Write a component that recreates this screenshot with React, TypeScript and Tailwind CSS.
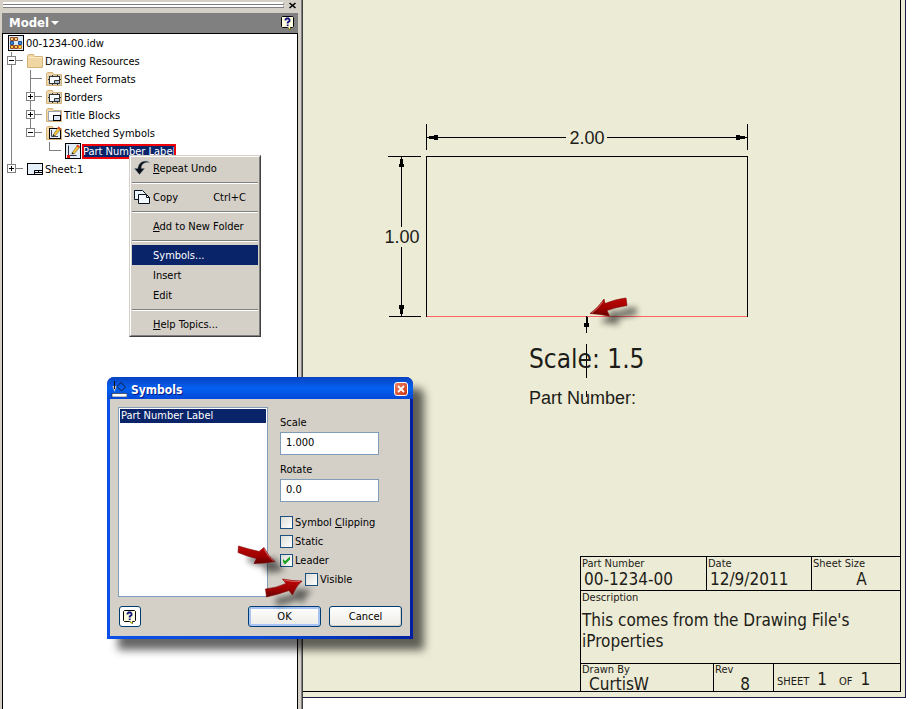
import { ReactNode } from 'react';

type Guide = 'line' | 'blank' | 'tee' | 'elbow' | 'plus' | 'minus' | 'plusLast' | 'minusLast';

interface TreeRow {
  label: string;
  icon: ReactNode;
  guides: Guide[];
  selected?: boolean;
}

const TreeGuide = ({ kind }: { kind: Guide }) => {
  const isBox = kind.startsWith('plus') || kind.startsWith('minus');
  const isLast = kind === 'elbow' || kind.endsWith('Last');

  return (
    <svg
      className="h-[18px] w-[19px] shrink-0"
      viewBox="0 0 19 18"
      fill="none"
      stroke="#808080"
      shapeRendering="crispEdges"
    >
      {kind !== 'blank' && <path d={isLast ? 'M5.5 0V9' : 'M5.5 0V18'} />}
      {kind !== 'blank' && kind !== 'line' && <path d="M5 8.5H17" />}
      {isBox && (
        <>
          <rect x="1.5" y="4.5" width="8" height="8" fill="#fff" />
          <path d="M3 8.5H8" stroke="#000" />
          {kind.startsWith('plus') && <path d="M5.5 6V11" stroke="#000" />}
        </>
      )}
    </svg>
  );
};

const Icon = ({ children }: { children: ReactNode }) => (
  <svg className="size-4 shrink-0" viewBox="0 0 16 16" fill="none" aria-hidden="true">
    {children}
  </svg>
);

const FolderShape = () => (
  <>
    <path d="M.5 14.5V2.5l1-1h5l1 2h8v11z" fill="#f0d6a2" stroke="#d4b27a" />
    <path d="M1 4.500h14" stroke="#fbeccb" />
  </>
);

const DrawingIcon = () => (
  <Icon>
    <rect x=".5" y=".5" width="15" height="15" fill="#dcebfa" stroke="#000" />
    <g strokeWidth="1">
      <path d="M2.500 2.500h3v3h-3z" fill="#f3d48a" stroke="#9a4a1c" />
      <path d="M6.500 2.500h3v3h-3z" fill="#f3d48a" stroke="#9a4a1c" />
      <path d="M2.500 6.500h3v3h-3z" fill="#3f8ad6" stroke="#1d4f94" />
      <path d="M10.500 6.500h3v3h-3z" fill="#3f8ad6" stroke="#1d4f94" />
      <path d="M2.500 10.500h3v3h-3z" fill="#f5c64c" stroke="#9a4a1c" />
      <path d="M6.500 10.500h3v3h-3z" fill="#f5c64c" stroke="#9a4a1c" />
      <path d="M10.500 10.500h3v3h-3z" fill="#ffe040" stroke="#c8701c" />
    </g>
  </Icon>
);

const FolderIcon = () => (
  <Icon>
    <FolderShape />
  </Icon>
);

const FormatFolderIcon = () => (
  <Icon>
    <FolderShape />
    <rect x="2" y="4" width="13" height="10" fill="#d3cdb9" />
    <rect x="3.500" y="5.500" width="10" height="7" fill="#f6f9fd" stroke="#303234" />
    <path d="M2 8.500h1M14 8.500h1M6.500 4v1M11.500 4v1M6.500 13v1M11.500 13v1" stroke="#303234" />
    <path d="M8.500 12V9.500H13" stroke="#303234" />
    <path d="M9 10h4v2H9z" fill="#b4c2d6" />
  </Icon>
);

const TitleFolderIcon = () => (
  <Icon>
    <FolderShape />
    <rect x="2.500" y="4.500" width="12" height="9" fill="#fff" stroke="#9aa5b5" />
    <rect x="7.500" y="8.500" width="7" height="5" fill="#dce8f8" stroke="#000" />
  </Icon>
);

const Pencil = () => (
  <>
    <path d="M7 10l5.500-8 2.500 2-6 7z" fill="#f6c234" stroke="#7a6a4a" strokeWidth=".6" />
    <path d="M12.500 1.500l2.500 2-1.200 1.500-2.400-2z" fill="#e04a2b" />
    <path d="M6.500 11.500l.6-2.200 1.800 1.500z" fill="#222" />
  </>
);

const SketchFolderIcon = () => (
  <Icon>
    <FolderShape />
    <rect x="3.500" y="3.500" width="11" height="10" fill="#e6effa" stroke="#000" />
    <path d="M5.500 5v6.500H12" stroke="#445" />
    <Pencil />
  </Icon>
);

const SketchIcon = () => (
  <Icon>
    <rect x=".5" y=".5" width="15" height="15" fill="#e2edfa" stroke="#000" />
    <path d="M3.500 2.500v10h8" stroke="#334" />
    <Pencil />
    <path d="M2 12h3v3H2z" fill="#f01010" />
  </Icon>
);

const SheetIcon = () => (
  <Icon>
    <rect x=".5" y="2.500" width="15" height="11" fill="#e6f0fb" stroke="#000" />
    <path d="M7.500 13V9.500H15M7.500 11.500H15M11.500 9.500V12" stroke="#000" />
  </Icon>
);

const HelpIcon = () => (
  <svg className="size-[14px]" viewBox="0 0 14 14" aria-hidden="true">
    <path d="M1.500.5h10l1 1v9l-1 1H9.500v2l-3-2h-5l-1-1v-9z" fill="#fffde0" stroke="#000" />
    <path
      d="M4.500 4.500V3.500l1-1h2l1 1v1.500l-1.800 1.500v1"
      fill="none"
      stroke="#12127c"
      strokeWidth="1.800"
    />
    <path d="M5.800 8.500h1.800v1.600H5.800z" fill="#12127c" />
    <path d="M7 12h2.500v2z" fill="#e8e020" />
  </svg>
);

const UndoIcon = () => (
  <Icon>
    <path
      d="M15.500 2.500C14 .5 5 -.5 3.800 8.500H.5L5.500 14.500l5-6H7.300C7 5 10 1.500 15.500 2.500z"
      fill="#0b1016"
      stroke="#6d8799"
      strokeWidth=".4"
    />
  </Icon>
);

const CopyIcon = () => (
  <Icon>
    <path d="M.5 1.500h8l3 3v6H.5z" fill="#eaf2fc" stroke="#0a1420" />
    <path d="M4.500 5.500h8l3 3v6h-11z" fill="#f4f9ff" stroke="#0a1420" />
    <path d="M12.500 5.500v3h3" stroke="#0a1420" />
  </Icon>
);

const treeRows: TreeRow[] = [
  { label: '00-1234-00.idw', icon: <DrawingIcon />, guides: [] },
  { label: 'Drawing Resources', icon: <FolderIcon />, guides: ['minus'] },
  { label: 'Sheet Formats', icon: <FormatFolderIcon />, guides: ['line', 'tee'] },
  { label: 'Borders', icon: <FormatFolderIcon />, guides: ['line', 'plus'] },
  { label: 'Title Blocks', icon: <TitleFolderIcon />, guides: ['line', 'plus'] },
  { label: 'Sketched Symbols', icon: <SketchFolderIcon />, guides: ['line', 'minusLast'] },
  {
    label: 'Part Number Label',
    icon: <SketchIcon />,
    guides: ['line', 'blank', 'elbow'],
    selected: true,
  },
  { label: 'Sheet:1', icon: <SheetIcon />, guides: ['plusLast'] },
];

const GripBar = () => (
  <div className="h-[3px] border-t-2 border-r border-b border-t-white border-r-[#808080] border-b-[#808080]" />
);

const ModelPanel = () => (
  <aside className="flex w-[303px] shrink-0 flex-col border-r border-[#404040] bg-[#d4d0c8]">
    <div className="flex flex-1 flex-col border-r border-[#808080] pr-[3px] pl-[2px]">
      <div className="flex h-[13px] items-start gap-[5px] pt-[2px] pl-px">
        <div className="flex flex-1 flex-col">
          <GripBar />
          <GripBar />
        </div>
        <button type="button" aria-label="Close panel" className="mr-[2px] h-[7px] w-[7px]">
          <svg viewBox="0 0 7 7" className="size-[7px]" stroke="#000" strokeWidth="1.600">
            <path d="M.5 1l6 5M6.500 1l-6 5" />
          </svg>
        </button>
      </div>
      <header className="flex h-5 items-center justify-between bg-[#808080] pr-[3px] pl-[7px]">
        <button type="button" className="flex items-center gap-[2px] text-[13px] font-bold text-white">
          Model
          <svg viewBox="0 0 8 4" className="h-1 w-2" fill="#fff">
            <path d="M0 0h8L4 4z" />
          </svg>
        </button>
        <button type="button" aria-label="Help">
          <HelpIcon />
        </button>
      </header>
      <ul className="flex-1 border-x border-t border-black bg-white pl-[3px]">
        {treeRows.map((row) => (
          <li key={row.label} className="flex h-[18px] items-center">
            {row.guides.map((guide, i) => (
              <TreeGuide key={i} kind={guide} />
            ))}
            <span className="ml-[2px] flex items-center gap-[2px]">
              {row.icon}
              {row.selected ? (
                <span className="bg-[#0a246a] leading-[13px] whitespace-nowrap text-white outline-2 -outline-offset-1 outline-[#f00008]">
                  {row.label}
                </span>
              ) : (
                <span className="pt-[2px] whitespace-nowrap">{row.label}</span>
              )}
            </span>
          </li>
        ))}
      </ul>
    </div>
  </aside>
);

interface MenuItemProps {
  children: ReactNode;
  icon?: ReactNode;
  shortcut?: string;
  active?: boolean;
}

const MenuItem = ({ children, icon, shortcut, active }: MenuItemProps) => (
  <button
    type="button"
    role="menuitem"
    className={`flex h-5 w-full items-center pr-3 pl-[2px] whitespace-nowrap ${active ? 'bg-[#0a246a] text-white' : ''}`}
  >
    <span className="w-[19px] shrink-0">{icon}</span>
    <span className="pt-[2px]">{children}</span>
    {shortcut && <span className="ml-auto pt-[2px]">{shortcut}</span>}
  </button>
);

const MenuSeparator = () => (
  <div role="separator" className="my-[4px] h-px border-t border-[#808080] shadow-[0_1px_0_#fff]" />
);

const ContextMenu = () => (
  <div className="absolute top-[155px] left-[129px] w-[132px] border border-t-[#d4d0c8] border-r-[#404040] border-b-[#404040] border-l-[#d4d0c8]">
    <div
      role="menu"
      className="border border-t-white border-r-[#808080] border-b-[#808080] border-l-white bg-[#d4d0c8] p-px"
    >
      <MenuItem icon={<UndoIcon />}>
        <u>R</u>epeat Undo
      </MenuItem>
      <MenuSeparator />
      <MenuItem icon={<CopyIcon />} shortcut="Ctrl+C">
        Copy
      </MenuItem>
      <MenuSeparator />
      <MenuItem>
        <u>A</u>dd to New Folder
      </MenuItem>
      <MenuSeparator />
      <MenuItem active>Symbols...</MenuItem>
      <MenuItem>Insert</MenuItem>
      <MenuItem>Edit</MenuItem>
      <MenuSeparator />
      <MenuItem>
        <u>H</u>elp Topics...
      </MenuItem>
    </div>
  </div>
);

interface MarkerArrowProps {
  id: string;
  body: string;
  highlight: string;
}

const MarkerArrow = ({ id, body, highlight }: MarkerArrowProps) => (
  <g>
    <defs>
      <linearGradient id={`${id}-fill`} x1="0" y1="0" x2="0" y2="1">
        <stop offset="0" stopColor="#c00808" />
        <stop offset=".6" stopColor="#9c0000" />
        <stop offset="1" stopColor="#640000" />
      </linearGradient>
      <filter id={`${id}-blur`} x="-50%" y="-100%" width="200%" height="300%">
        <feGaussianBlur stdDeviation="3" />
      </filter>
    </defs>
    <path d={body} transform="translate(10 9)" fill="#000" opacity=".55" filter={`url(#${id}-blur)`} />
    <path d={body} fill={`url(#${id}-fill)`} stroke="#7c0000" strokeWidth=".6" />
    <path d={highlight} fill="none" stroke="#f2a0a0" strokeWidth=".6" />
  </g>
);

interface CheckFieldProps {
  label: ReactNode;
  defaultChecked?: boolean;
  nested?: boolean;
}

const CheckField = ({ label, defaultChecked, nested }: CheckFieldProps) => (
  <label className={`flex h-[19px] items-center gap-[2px] whitespace-nowrap ${nested ? 'ml-[25px]' : ''}`}>
    <span className="relative size-[13px]">
      <input
        type="checkbox"
        defaultChecked={defaultChecked}
        className="peer block size-[13px] appearance-none border border-[#1c5180] bg-linear-to-br from-[#dcdcd7] to-white"
      />
      <svg
        viewBox="0 0 13 13"
        className="pointer-events-none absolute inset-0 hidden size-[13px] peer-checked:block"
        fill="#21a121"
      >
        <path d="M3 5l2 2 5-4.500v3L5 10.500 3 8z" />
      </svg>
    </span>
    <span className="pt-px">{label}</span>
  </label>
);

const TextField = ({ id, label, value }: { id: string; label: string; value: string }) => (
  <div className="flex flex-col">
    <label htmlFor={id} className="h-[18px] leading-[18px]">
      {label}
    </label>
    <input
      id={id}
      defaultValue={value}
      className="h-[23px] w-[99px] border border-[#7f9db9] bg-white pb-[3px] pl-[5px] outline-none"
    />
  </div>
);

const DialogButton = ({ children, primary }: { children: ReactNode; primary?: boolean }) => (
  <button
    type="button"
    className={`h-[21px] w-[73px] rounded-[3px] border border-[#003c74] bg-linear-to-b from-white to-[#ecebe5] pt-px ${
      primary ? 'shadow-[inset_0_0_0_2px_#a8c4f4]' : 'shadow-[inset_-1px_-1px_0_#d6d0c5]'
    }`}
  >
    {children}
  </button>
);

const SymbolsDialog = () => (
  <section
    role="dialog"
    aria-labelledby="symbols-title"
    className="absolute top-[377px] left-[107px] w-[306px] rounded-t-[7px] bg-linear-to-r from-[#0a50e8] via-[#0848d8] to-[#001ea0] px-[3px] pb-[3px] shadow-[11px_11px_8px_rgba(0,0,0,0.6)]"
  >
    <header className="-mx-[3px] flex h-[22px] items-center rounded-t-[7px] bg-linear-to-b from-[#0842c0] via-[#0560f0] to-[#0348d8] pr-[5px] pl-1">
      <svg viewBox="0 0 16 16" className="mt-px size-4" fill="none" aria-hidden="true">
        <path d="M10 1.500l4.500 4.500-4 4L6 5.500z" stroke="#10203c" />
        <path d="M1.500 5l2 6 2-6z" fill="#d8d0b8" />
        <path d="M3.500 0v8" stroke="#111" />
        <path d="M1 12.500h15V16H1z" fill="#fff" stroke="#222" strokeWidth=".6" />
      </svg>
      <h2
        id="symbols-title"
        className="mt-1 ml-1 flex-1 text-[12px] leading-4 font-bold text-white [text-shadow:1px_1px_0_#0a1883]"
      >
        Symbols
      </h2>
      <button
        type="button"
        aria-label="Close"
        className="mt-[2px] grid size-[14px] place-items-center rounded-[3px] border border-white bg-linear-to-br from-[#f08060] to-[#c8320c]"
      >
        <svg viewBox="0 0 8 8" className="size-2" stroke="#fff" strokeWidth="1.800">
          <path d="M1 1l6 6M7 1l-6 6" />
        </svg>
      </button>
    </header>
    <form className="bg-[#d4d0c8] px-2 pt-2 pb-[9px]" onSubmit={(e) => e.preventDefault()}>
      <div className="flex">
        <ul
          role="listbox"
          aria-label="Symbols"
          className="h-[190px] w-[150px] shrink-0 border border-[#7f9db9] bg-white p-px"
        >
          <li role="option" aria-selected="true" className="bg-[#0a246a] pl-px leading-[14px] text-white">
            Part Number Label
          </li>
        </ul>
        <div className="ml-3 flex flex-1 flex-col pt-[7px]">
          <TextField id="scale" label="Scale" value="1.000" />
          <div className="mt-[6px]">
            <TextField id="rotate" label="Rotate" value="0.0" />
          </div>
          <div className="mt-[11px]">
            <CheckField
              label={
                <>
                  Symbol <u>C</u>lipping
                </>
              }
            />
            <CheckField label="Static" />
            <CheckField label="Leader" defaultChecked />
            <CheckField label="Visible" nested />
          </div>
        </div>
      </div>
      <div className="mt-[9px] flex items-center gap-2 pl-px">
        <button
          type="button"
          aria-label="Help"
          className="mr-auto grid h-[21px] w-[22px] place-items-center rounded-[3px] border border-[#003c74] bg-white"
        >
          <HelpIcon />
        </button>
        <DialogButton primary>OK</DialogButton>
        <DialogButton>Cancel</DialogButton>
      </div>
    </form>
    <svg
      className="pointer-events-none absolute top-[163px] left-[123px] h-[80px] w-[100px]"
      viewBox="230 540 100 80"
      aria-hidden="true"
    >
      <MarkerArrow
        id="leader"
        body="M238.500 546Q248 549 259 551.500L264 547.500Q268 556 275 561.500Q265 563.500 254 563.500L256.500 558.500Q246 556 238 552.500z"
        highlight="M264 549Q268 557 273.500 561"
      />
      <MarkerArrow
        id="visible"
        body="M265.500 589Q276 588 286 583.500L282.500 579Q293 581 302 581Q296 586 292.500 595L289 590.500Q278 594.500 266.500 597z"
        highlight="M284 580Q293 582 300 581.500"
      />
    </svg>
  </section>
);

const PartView = () => (
  <svg className="w-full max-w-[597px]" viewBox="303 0 597 420" fill="none" stroke="#000">
    <g shapeRendering="crispEdges">
      <path d="M426.500 317V156.500H747.500V317" />
      <path d="M427 316.500H747" stroke="#ff6464" />
      {/* width dimension */}
      <path d="M426.500 124V150M747.500 124V150M427 137.500H566M607 137.500H747" />
      <path d="M429 136h5v-1h4v5h-4v-1h-5zM745 136h-5v-1h-4v5h4v-1h5z" fill="#000" stroke="none" />
      {/* height dimension */}
      <path d="M388 156.500H421M389 316.500H421M401.500 157V227M401.500 247V316" />
      <path d="M400 159h3v5h1v3h-5v-3h1zM400 314h3v-5h1v-4h-5v4h1z" fill="#000" stroke="none" />
      {/* leader */}
      <path d="M586.500 316V333M586.500 344V378M586.500 391V397" />
      <path d="M586 317h2v6h1v4h-5v-4h2z" fill="#000" stroke="none" />
    </g>
    <g fill="#1c1c18" stroke="none">
      <text x="587" y="144" textAnchor="middle" className="font-['Liberation_Sans',sans-serif] text-[18px]">
        2.00
      </text>
      <text x="402" y="243" textAnchor="middle" className="font-['Liberation_Sans',sans-serif] text-[18px]">
        1.00
      </text>
      <text x="529" y="368" className="text-[26px]">
        Scale: 1.5
      </text>
      <text x="529" y="404" className="font-['Liberation_Sans',sans-serif] text-[18px]">
        Part Number:
      </text>
    </g>
    <g stroke="none">
      <MarkerArrow
        id="edge"
        body="M626 298Q616 299 605 303.500L604 299Q598 308 590 313.500Q600 314 609.500 316L607 310.500Q617 307 627 305.500z"
        highlight="M603 301.500Q598 309 592 313"
      />
    </g>
  </svg>
);

const BlockCell = ({ label, children }: { label: string; children: ReactNode }) => (
  <div className="border-l border-black pl-px">
    <div className="h-3">{label}</div>
    <div className="pl-[2px] text-[17px]">{children}</div>
  </div>
);

const TitleBlock = () => (
  <div className="mt-auto w-[320px] max-w-full self-end text-[#1c1c18]">
    <div className="grid h-[34px] grid-cols-[126px_105px_1fr] border-t border-black leading-[14px]">
      <BlockCell label="Part Number">
        <div className="leading-5">00-1234-00</div>
      </BlockCell>
      <BlockCell label="Date">
        <div className="leading-5">12/9/2011</div>
      </BlockCell>
      <BlockCell label="Sheet Size">
        <div className="pl-2 text-center leading-5">A</div>
      </BlockCell>
    </div>
    <div className="h-[73px] border-t border-l border-black pl-px">
      <div className="h-[19px] leading-[14px]">Description</div>
      <p className="text-[17px] leading-[21px]">This comes from the Drawing File's iProperties</p>
    </div>
    <div className="grid h-7 grid-cols-[133px_60px_1fr] border-t border-black leading-3">
      <BlockCell label="Drawn By">
        <div className="pl-[5px] leading-4">CurtisW</div>
      </BlockCell>
      <BlockCell label="Rev">
        <div className="text-center leading-4">8</div>
      </BlockCell>
      <div className="flex items-baseline gap-2 border-l border-black pt-[5px] pl-[3px] leading-5">
        <span>SHEET</span>
        <span className="text-[17px]">1</span>
        <span className="ml-1">OF</span>
        <span className="text-[17px]">1</span>
      </div>
    </div>
  </div>
);

export default function App() {
  return (
    <div className="relative flex min-h-screen bg-white font-['DejaVu_Sans_Condensed','DejaVu_Sans',sans-serif] text-[11px] text-black">
      <ModelPanel />
      <main className="mr-[7px] mb-[11px] flex min-w-0 flex-1 border-r border-b border-[#1a1a3c] bg-[#ecebd5] pr-1 pb-[5px]">
        <div className="flex min-w-0 flex-1 flex-col border-r border-b border-black">
          <PartView />
          <TitleBlock />
        </div>
      </main>
      <ContextMenu />
      <SymbolsDialog />
    </div>
  );
}
